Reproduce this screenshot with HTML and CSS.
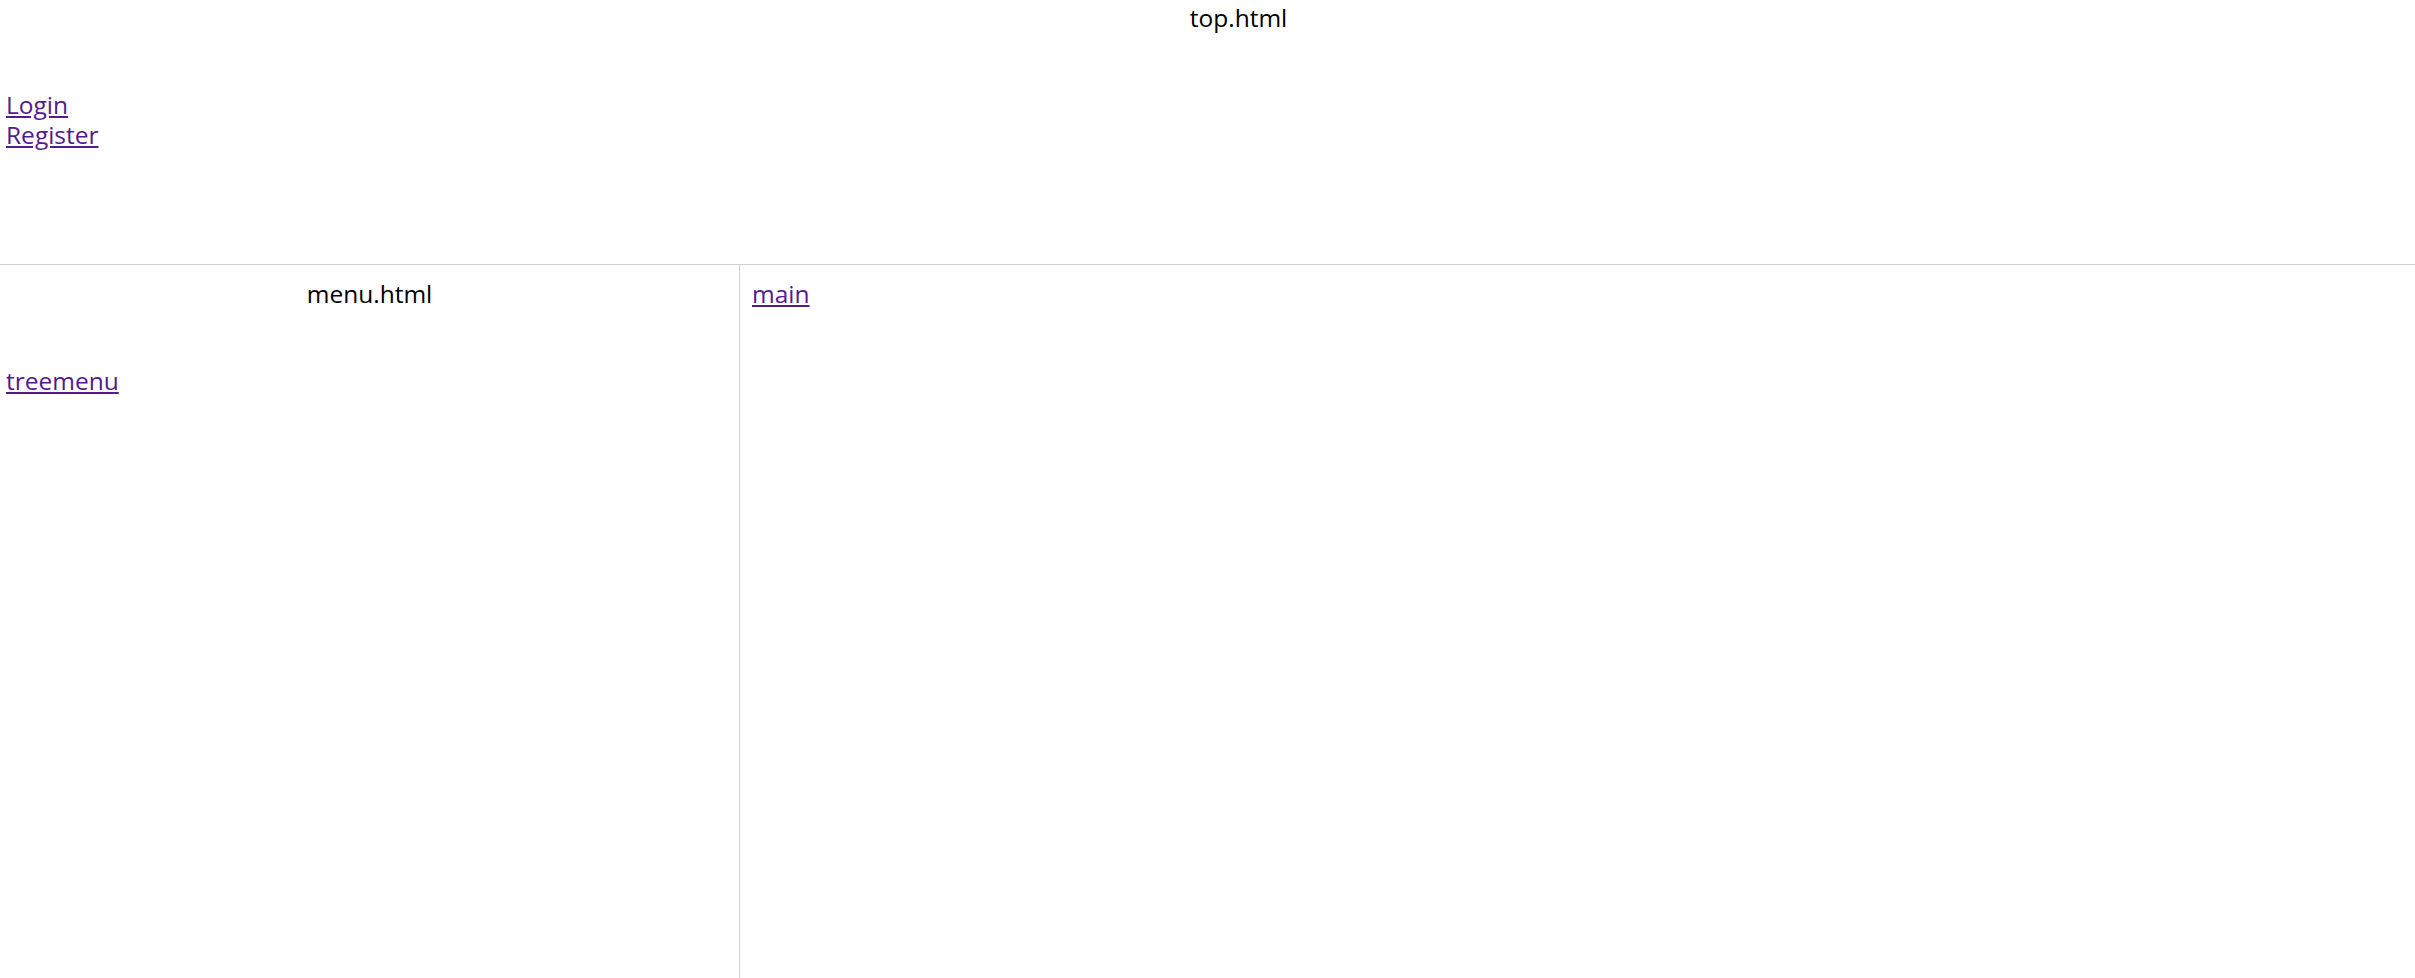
FILE: index.html
```html
<!DOCTYPE html>
<html lang="en">
<head>
  <meta charset="UTF-8" />
  <title>frames</title>
  <link rel="stylesheet" href="styles.css">
</head>
<body>

  <div class="top">
    <div class="title top-title">top.html</div>
    <div class="gap"></div>
    <a href="#">Login</a><br>
    <a href="#">Register</a>
  </div>

  <div class="bottom">
    <div class="menu">
      <div class="title">menu.html</div>
      <div class="gap"></div>
      <a href="#">treemenu</a>
    </div>
    <div class="main">
      <a href="#">main</a>
    </div>
  </div>

</body>
</html>
```

FILE: styles.css
```css
html, body {
  height: 100%;
}

body {
  margin: 0;
  font-family: 'Open Sans', sans-serif;
  font-size: 24.5px;
  line-height: 30px;
  color: #000;
  background: #fff;
  display: flex;
  flex-direction: column;
}

a {
  color: #551a8b;
}

.top {
  height: 265px;
  box-sizing: border-box;
  padding: 3px 6px 0;
  border-bottom: 1px solid #d0d0d0;
  flex: none;
}

.title {
  text-align: center;
}

.top-title {
  padding-left: 62px;
}

.gap {
  height: 57px;
}

.bottom {
  flex: 1;
  display: grid;
  grid-template-columns: 740px 1fr;
}

.menu {
  border-right: 1px solid #d0d0d0;
  padding: 14px 6px 0;
}

.main {
  padding: 14px 12px 0;
}
```
